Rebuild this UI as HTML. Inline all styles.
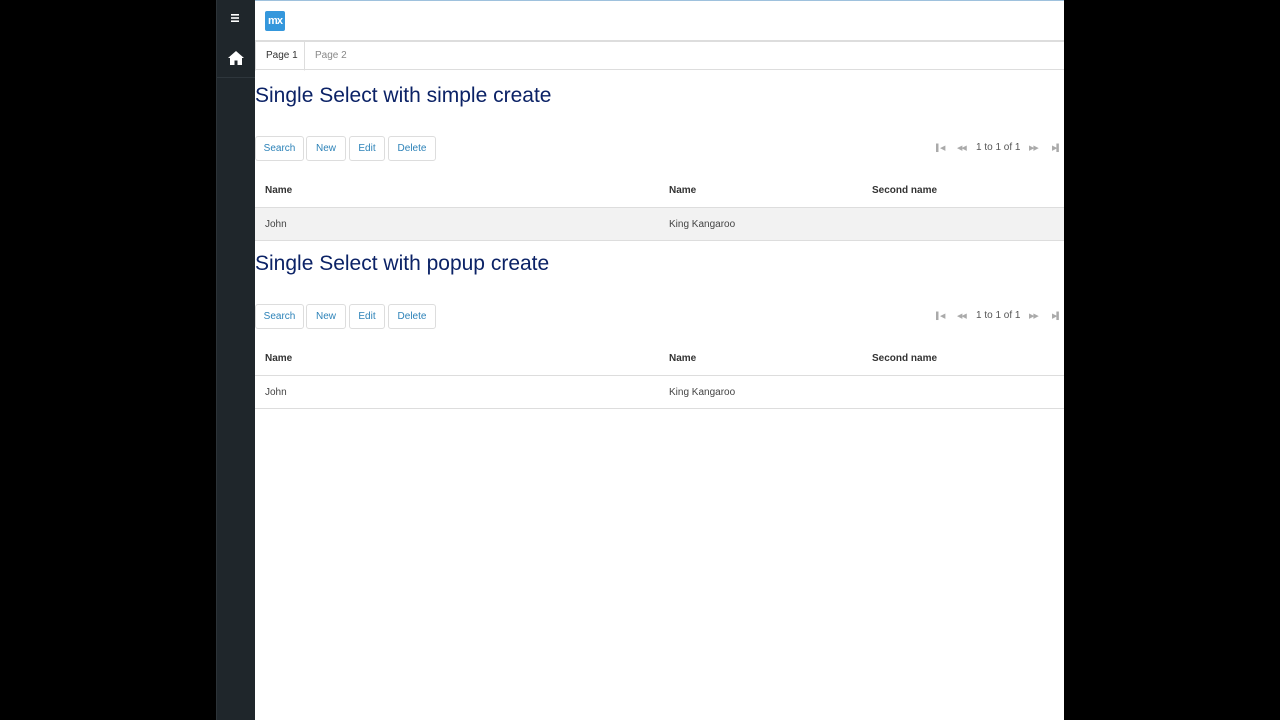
<!DOCTYPE html>
<html><head><style>
*{box-sizing:border-box;margin:0;padding:0}
body{width:1280px;height:720px;background:#000;position:relative;overflow:hidden;font-family:"Liberation Sans",sans-serif}
.side{position:absolute;left:216px;top:0;width:39px;height:720px;background:#1f262b;border-left:1px solid #2c3338}
.main{position:absolute;left:255px;top:0;width:809px;height:720px;background:#fff;border-top:1px solid #9ec1dd}
.hdr{height:41px;border-bottom:2px solid #ddd;position:relative}
.logo{position:absolute;left:10px;top:10px;width:20px;height:20px;background:#3497dc;border-radius:2px;color:#fff;font-size:11px;font-weight:bold;text-align:center;line-height:20px;letter-spacing:-1px}
.tabs{height:28px;border-bottom:1px solid #ddd;position:relative;font-size:10px;color:#555;white-space:nowrap}
.tab{position:absolute;top:0;height:29px;line-height:28px;padding:0 10px}
.t1{left:0;border:1px solid #ddd;border-top:none;border-bottom:1px solid #fff;color:#333;width:50px}
.t2{left:50px;color:#888}
h2{position:absolute;left:0;font-weight:normal;font-size:21px;color:#0b2266;white-space:nowrap}
.btn{position:absolute;height:25px;border:1px solid #ddd;border-radius:3px;font-size:10px;color:#2c82b8;line-height:24px;text-align:center}
.pg{position:absolute;font-size:10px;color:#555}
.pi{position:absolute;font-size:7px;color:#aaa;letter-spacing:-1px}
.th{position:absolute;font-size:10px;font-weight:bold;color:#333}
.row{position:absolute;left:0;width:809px;height:34px;border-top:1px solid #ddd;border-bottom:1px solid #ddd;font-size:10px;color:#444}
.row span{position:absolute;top:11px}
</style></head><body>
<div class="side">
<svg style="position:absolute;left:14px;top:14px" width="8" height="8" viewBox="0 0 8 8"><rect y="0" width="8" height="1.6" fill="#fff"/><rect y="3.2" width="8" height="1.6" fill="#fff"/><rect y="6.4" width="8" height="1.6" fill="#fff"/></svg>
<svg style="position:absolute;left:11px;top:51px" width="16" height="14" viewBox="0 0 16 14"><path d="M8 0L0 7h2v7h4.5v-4.5h3V14H14V7h2z" fill="#fff"/></svg>
<div style="position:absolute;left:0;top:77px;width:38px;height:1px;background:#2e363c"></div>
</div>
<div class="main">
<div class="hdr"><div class="logo">mx</div></div>
<div class="tabs"><div class="tab t1">Page 1</div><div class="tab t2">Page 2</div></div>

<h2 style="top:83px">Single Select with simple create</h2>
<div class="btn" style="left:0;top:135px;width:49px">Search</div>
<div class="btn" style="left:51px;top:135px;width:40px">New</div>
<div class="btn" style="left:94px;top:135px;width:36px">Edit</div>
<div class="btn" style="left:133px;top:135px;width:48px">Delete</div>
<div class="pi" style="left:681px;top:143px">▌◀</div><div class="pi" style="left:702px;top:143px">◀◀</div>
<div class="pg" style="left:721px;top:141px">1 to 1 of 1</div>
<div class="pi" style="left:774px;top:143px">▶▶</div><div class="pi" style="left:797px;top:143px">▶▌</div>
<div class="th" style="left:10px;top:184px">Name</div><div class="th" style="left:414px;top:184px">Name</div><div class="th" style="left:617px;top:184px">Second name</div>
<div class="row" style="top:206px;background:#f2f2f2"><span style="left:10px">John</span><span style="left:414px">King Kangaroo</span></div>

<h2 style="top:251px">Single Select with popup create</h2>
<div class="btn" style="left:0;top:303px;width:49px">Search</div>
<div class="btn" style="left:51px;top:303px;width:40px">New</div>
<div class="btn" style="left:94px;top:303px;width:36px">Edit</div>
<div class="btn" style="left:133px;top:303px;width:48px">Delete</div>
<div class="pi" style="left:681px;top:311px">▌◀</div><div class="pi" style="left:702px;top:311px">◀◀</div>
<div class="pg" style="left:721px;top:309px">1 to 1 of 1</div>
<div class="pi" style="left:774px;top:311px">▶▶</div><div class="pi" style="left:797px;top:311px">▶▌</div>
<div class="th" style="left:10px;top:352px">Name</div><div class="th" style="left:414px;top:352px">Name</div><div class="th" style="left:617px;top:352px">Second name</div>
<div class="row" style="top:374px"><span style="left:10px">John</span><span style="left:414px">King Kangaroo</span></div>
</div>
</body></html>
